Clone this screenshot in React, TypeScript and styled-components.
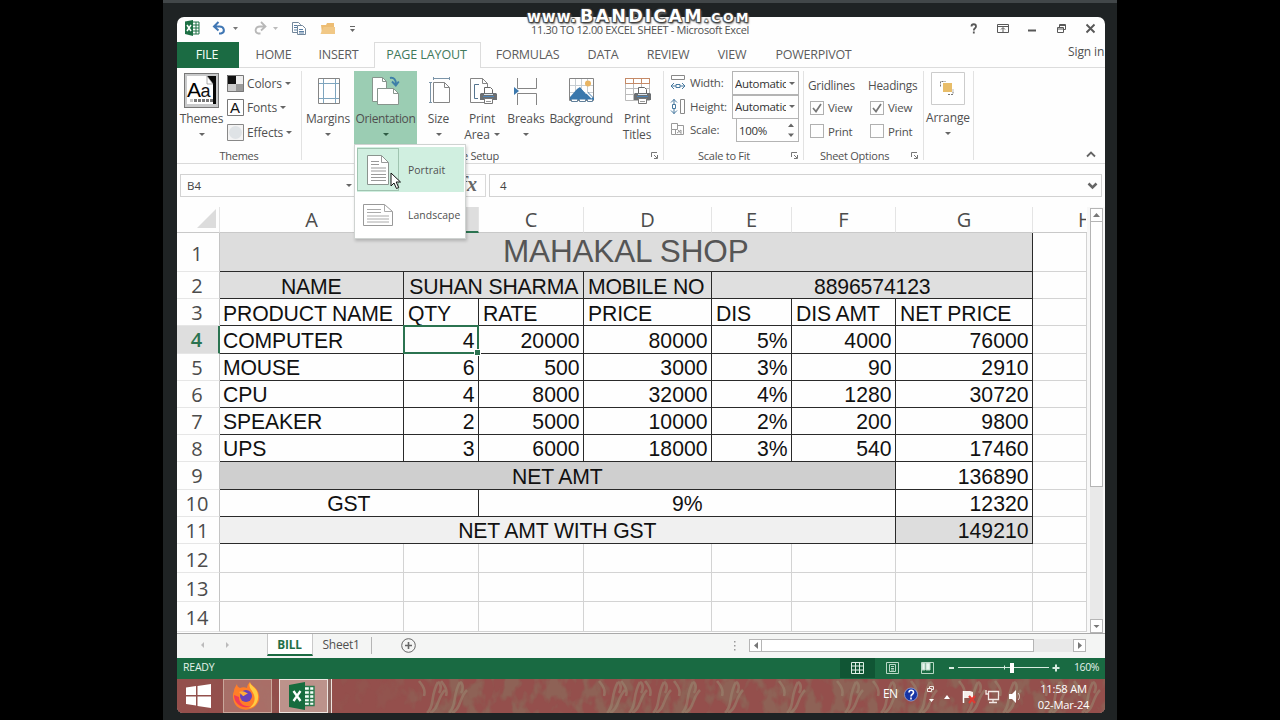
import React from "react";
import styled, { createGlobalStyle, css } from "styled-components";

const GREEN = "#1b6b43";
const UI = `"Open Sans", "Noto Sans", sans-serif`;

const Global = createGlobalStyle`
  * { box-sizing: border-box; }
  body { margin: 0; background: #000; font-family: ${UI}; color: #505050; overflow: hidden; }
  svg { display: block; flex: none; }
`;

const Stage = styled.div`
  position: relative;
  width: 1280px;
  height: 720px;
  padding-left: 163px;
  background: #000;
`;
const Bezel = styled.div`
  width: 954px;
  height: 720px;
  padding: 14px 12px 7px 14px;
  background: #1f2324;
  border-top: 3px solid #424749;
`;
const Screen = styled.div`
  display: flex;
  flex-direction: column;
  width: 928px;
  height: 696px;
  overflow: hidden;
  background: #fefefe;
  border-radius: 7px 7px 6px 6px;
`;
const Watermark = styled.div`
  position: absolute;
  left: 527px;
  top: 6px;
  display: flex;
  align-items: baseline;
  color: #fff;
  font-family: "DejaVu Sans", sans-serif;
  font-weight: bold;
  line-height: 20px;
  text-shadow: 0 0 2px #333, 1px 1px 1px #444, -1px 1px 1px #555, 1px 2px 2px #777, 0 -1px 1px #444;
`;
const Mark = styled.span<{ $size: number; $gap: number; $w: number }>`
  width: ${(p) => p.$w}px;
  font-size: ${(p) => p.$size}px;
  letter-spacing: ${(p) => p.$gap}px;
  white-space: nowrap;
`;

/* title bar */
const TitleBar = styled.div`
  display: flex;
  flex: none;
  height: 25px;
`;
const QuickAccess = styled.div`
  width: 240px;
`;
const Title = styled.div`
  flex: 1;
  padding: 5px 0 0 114px;
  font-size: 11px;
  line-height: 16px;
  letter-spacing: -0.33px;
  white-space: nowrap;
`;
const WindowButtons = styled.div`
  width: 145px;
`;

/* tabs */
const TabStrip = styled.div`
  display: flex;
  flex: none;
  height: 26px;
  box-shadow: inset 0 -1px #dcdcdc;
`;
const Tab = styled.div<{ $w: number; $kind?: "file" | "active"; $trail?: number }>`
  width: ${(p) => p.$w}px;
  padding-right: ${(p) => p.$trail ?? 0}px;
  text-align: center;
  font-size: 12.5px;
  line-height: 26px;
  letter-spacing: -0.25px;
  white-space: nowrap;
  color: #5c5c5c;
  ${(p) => p.$kind === "file" && css`background: ${GREEN}; color: #f2fff6; `}
  ${(p) => p.$kind === "active" && css`background: #fefefe; color: #41795a; border: 1px solid #dcdcdc; border-bottom: 0; line-height: 24px; letter-spacing: -0.1px;`}
`;
const SignIn = styled.div`
  margin-left: auto;
  width: 37px;
  font-size: 12px;
  line-height: 19px;
  letter-spacing: -0.1px;
  white-space: nowrap;
`;

/* ribbon */
const Ribbon = styled.div`
  display: flex;
  flex: none;
  height: 96px;
  padding-top: 3px;
  border-bottom: 1px solid #dadada;
`;
const Group = styled.div<{ $w: number }>`
  position: relative;
  display: flex;
  flex-direction: column;
  width: ${(p) => p.$w}px;
  height: 89px;
  border-right: 1px solid #e2e2e2;
`;
const GroupBody = styled.div`
  display: flex;
  flex: none;
  height: 76px;
`;
const GroupLabel = styled.div<{ $trail?: number }>`
  position: relative;
  flex: none;
  height: 17px;
  padding-right: ${(p) => p.$trail ?? 0}px;
  text-align: center;
  font-size: 11px;
  line-height: 18px;
  letter-spacing: -0.25px;
  white-space: nowrap;
`;
const Launcher = styled.svg`
  position: absolute;
  right: 4px;
  top: 4px;
`;
const BigButton = styled.div<{ $w: number; $open?: boolean }>`
  display: flex;
  flex-direction: column;
  align-items: center;
  width: ${(p) => p.$w}px;
  height: 73px;
  padding-top: 4px;
  font-size: 12px;
  line-height: 16px;
  letter-spacing: ${(p) => (p.$w > 60 ? -0.4 : -0.12)}px;
  white-space: nowrap;
  background: ${(p) => (p.$open ? "#9bcdb3" : "transparent")};
`;
const ButtonLabel = styled.span`
  margin-top: 4px;
`;
const ArrowRow = styled.span`
  display: flex;
  align-items: center;
  justify-content: center;
  gap: 4px;
  height: 15px;
`;
const SmallList = styled.div`
  display: flex;
  flex-direction: column;
`;
const SmallItem = styled.div`
  display: flex;
  align-items: center;
  gap: 3px;
  height: 24.5px;
  padding-left: 1px;
  font-size: 12px;
  letter-spacing: -0.15px;
`;
const ScaleList = styled.div`
  width: 68px;
  padding-left: 6px;
`;
const ScaleRow = styled.div`
  display: flex;
  align-items: center;
  gap: 4px;
  height: 23.5px;
  font-size: 11.5px;
  letter-spacing: -0.2px;
`;
const Combos = styled.div`
  display: flex;
  flex-direction: column;
  align-items: flex-end;
  width: 67px;
`;
const Combo = styled.div<{ $w: number }>`
  display: flex;
  align-items: center;
  justify-content: space-between;
  width: ${(p) => p.$w}px;
  height: 24px;
  padding: 0 3px 0 2px;
  border: 1px solid #b4b4b4;
  & + & { margin-top: -0.5px; }
  color: #333;
  font-size: 11.5px;
  letter-spacing: -0.3px;
`;
const Clip = styled.span`
  width: 51px;
  overflow: hidden;
  white-space: nowrap;
`;
const CheckColumn = styled.div<{ $w: number }>`
  width: ${(p) => p.$w}px;
  padding: 3px 0 0 4px;
  font-size: 11.8px;
  letter-spacing: -0.25px;
`;
const CheckTitle = styled.div`
  height: 22px;
  line-height: 22px;
`;
const CheckRow = styled.div`
  display: flex;
  align-items: center;
  gap: 4px;
  height: 23.5px;
  padding-left: 2px;
  font-size: 11.5px;
`;
const Box = styled.span`
  width: 14px;
  height: 14px;
  border: 1px solid #b0b0b0;
`;
const Collapse = styled.div`
  margin: 78px 8px 0 auto;
`;
const Menu = styled.div`
  position: absolute;
  z-index: 5;
  left: 52px;
  top: 73px;
  width: 112px;
  height: 95px;
  padding: 2px 1px 3px 2px;
  background: #fff;
  border: 1px solid #cfd3d1;
  box-shadow: 1px 2px 3px #0003;
`;
const MenuItem = styled.div<{ $on?: boolean }>`
  display: flex;
  align-items: center;
  gap: 9px;
  height: 45px;
  font-size: 10.4px;
  line-height: 40px;
  letter-spacing: 0.05px;
  background: ${(p) => (p.$on ? "#d0efe0" : "transparent")};
`;
const MenuIcon = styled.span<{ $on?: boolean }>`
  display: flex;
  align-items: center;
  justify-content: center;
  width: 42px;
  height: 43px;
  border: 1px solid ${(p) => (p.$on ? "#9fc4b0" : "transparent")};
`;
const Pointer = styled.svg`
  position: absolute;
  z-index: 6;
  left: 390px;
  top: 172px;
`;

/* formula bar */
const FormulaBar = styled.div`
  display: flex;
  flex: none;
  height: 43px;
  padding: 10px 3px 0 3px;
`;
const Field = styled.div<{ $w: number; $pad?: number }>`
  display: flex;
  align-items: center;
  justify-content: space-between;
  width: ${(p) => p.$w}px;
  height: 23px;
  padding: 0 3px 0 ${(p) => p.$pad ?? 6}px;
  border: 1px solid #d2d2d2;
  font-size: 11.5px;
  color: #444;
`;
const Fx = styled.div`
  width: 130px;
  height: 23px;
  margin-right: 3px;
  padding-right: 8px;
  border: 1px solid #d8d8d8;
  border-left: 0;
  text-align: right;
  font: italic bold 20px/18px "Liberation Serif", serif;
  color: #666;
`;

/* sheet */
const SheetArea = styled.div`
  display: flex;
  flex: none;
  height: 426px;
`;
const Grid = styled.div`
  display: grid;
  width: 910px;
  grid-template-columns: 43px 184px 75px 105px 128px 80px 104px 137px 54px;
  grid-template-rows: 26px 39px 27px 27px 28px 27px 27px 27px 27px 28px 27px 27px 29px 29px 30px;
`;
const Head = styled.div<{ $on?: boolean; $row?: boolean; $gr: number; $gc: number }>`
  display: flex;
  align-items: center;
  justify-content: center;
  grid-row: ${(p) => p.$gr};
  grid-column: ${(p) => p.$gc};
  overflow: hidden;
  font-size: 20px;
  color: #4c4c4c;
  border-right: 1px solid #e4e4e4;
  border-bottom: 1px solid #c9c9c9;
  ${(p) => p.$row && css`border-right-color: #c4c4c4; border-bottom-color: #e6e6e6; padding: ${p.$gr > 12 || p.$gr === 2 ? 3 : 1}px 2px 0 0; line-height: 24px; `}
  ${(p) => p.$on && css`background: #dedede; color: #2b7350;`}
  ${(p) => p.$on && p.$row && css`font-weight: 600; border-right: 2px solid #2b7350;`}
  ${(p) => p.$on && !p.$row && css`border-bottom: 2px solid #2b7350;`}
`;
const HeadH = styled(Head)`
  justify-content: flex-end;
  border-right: 0;
  padding-right: 1px;
`;
const HClip = styled.span`
  width: 8px;
  overflow: hidden;
`;
const Corner = styled.div`
  display: flex;
  justify-content: flex-end;
  align-items: flex-end;
  padding: 0 3px 3px 0;
  border-right: 1px solid #e4e4e4;
  border-bottom: 1px solid #c9c9c9;
`;
const Cell = styled.div<{ $r: number; $c: number; $span: number; $align: string; $fill: string; $line: string; $big: boolean }>`
  display: flex;
  align-items: center;
  justify-content: ${(p) => p.$align};
  grid-row: ${(p) => p.$r + 1};
  grid-column: ${(p) => p.$c + 1} / span ${(p) => p.$span};
  padding: ${(p) => (p.$big ? 0 : p.$r < 5 ? 2.6 : 1.6)}px 3.5px 0 ${(p) => (p.$c === 1 ? 3 : 4)}px;
  overflow: hidden;
  background: ${(p) => p.$fill};
  border-right: 1px solid ${(p) => p.$line};
  border-bottom: 1px solid ${(p) => p.$line};
  font-family: "Liberation Sans", Arial, sans-serif;
  font-size: ${(p) => (p.$big ? 31.5 : 21.2)}px;
  letter-spacing: ${(p) => (p.$align === "flex-end" ? 0 : -0.15)}px;
  line-height: 1;
  white-space: nowrap;
  color: ${(p) => (p.$big ? "#555" : "#111")};
`;
const Selection = styled.div`
  position: relative;
  z-index: 2;
  grid-row: 5;
  grid-column: 3;
  margin: -1px 0 0 -1px;
  border: 2px solid #2b7350;
  &::after {
    content: "";
    position: absolute;
    right: -3px;
    bottom: -3px;
    width: 5px;
    height: 5px;
    background: #2b7350;
    outline: 1px solid #fff;
  }
`;
const VScroll = styled.div`
  display: flex;
  flex-direction: column;
  width: 18px;
  padding: 1px 2px 0 3px;
  background: #f8f8f8;
`;
const ScrollButton = styled.div`
  display: flex;
  flex: none;
  align-items: center;
  justify-content: center;
  width: 13px;
  height: 14px;
  background: #fff;
  border: 1px solid #b5b5b5;
`;
const HButton = styled(ScrollButton)`
  height: 13px;
`;
const VThumb = styled.div`
  width: 13px;
  height: 266px;
  background: #fff;
  border: 1px solid #b5b5b5;
  border-top: 0;
`;
const VTrack = styled.div`
  width: 13px;
  height: 132px;
  background: #e9e9e9;
`;

/* sheet tabs */
const SheetTabs = styled.div`
  display: flex;
  flex: none;
  height: 25px;
  background: #f4f5f4;
  border-top: 1px solid #a9a9a9;
`;
const TabNav = styled.div`
  display: flex;
  gap: 20px;
  width: 90px;
  padding: 7px 0 0 23px;
`;
const SheetTab = styled.div<{ $w: number; $on?: boolean }>`
  width: ${(p) => p.$w}px;
  height: 22px;
  padding-right: 1px;
  text-align: center;
  font-size: 12px;
  line-height: 22px;
  letter-spacing: -0.25px;
  ${(p) => p.$on && css`background: #fff; color: #1f6f47; font-weight: 700; border: 1px solid #c9c9c9; border-width: 0 1px 2px; border-bottom-color: ${GREEN}; font-size: 11.8px; line-height: 21px; letter-spacing: -0.15px;`}
`;
const TabDivider = styled.div`
  width: 1px;
  height: 17px;
  margin: 3px 29px 0 1px;
  background: #b5b5b5;
`;
const PlusIcon = styled.svg`
  margin-top: 4px;
`;
const HScroll = styled.div`
  display: flex;
  width: 337px;
  height: 13px;
  margin: 5px 19px 0 auto;
  background: #e9e9e9;
`;
const HThumb = styled.div`
  width: 272px;
  margin-right: auto;
  background: #fff;
  border: 1px solid #b5b5b5;
  border-left: 0;
`;
const Dots = styled.div`
  margin: 6px 0 0 317px;
`;

/* status bar */
const StatusBar = styled.div`
  display: flex;
  flex: none;
  height: 21px;
  padding-left: 6px;
  color: #e4f2ea;
  background: #196a42;
  font-size: 10.5px;
  line-height: 19px;
  letter-spacing: -0.2px;
`;
const Ready = styled.span`
  flex: 1;
`;
const ViewButton = styled.div<{ $on?: boolean }>`
  display: flex;
  align-items: center;
  justify-content: center;
  width: 35px;
  height: 20px;
  background: ${(p) => (p.$on ? "#105534" : "transparent")};
`;
const ZoomSlider = styled.svg`
  margin-left: 4px;
`;
const ZoomText = styled.span`
  margin-left: 12px;
  width: 31px;
  letter-spacing: -0.4px;
`;

/* taskbar */
const Taskbar = styled.div`
  position: relative;
  display: flex;
  flex: none;
  height: 34px;
  background: #93504d;
  color: #fff;
`;
const Wallpaper = styled.svg`
  position: absolute;
  inset: 0;
`;
const Start = styled.div`
  z-index: 1;
  width: 46px;
  padding: 5px 0 0 9px;
`;
const TaskButton = styled.div<{ $on?: boolean }>`
  z-index: 1;
  display: flex;
  align-items: center;
  justify-content: center;
  width: 49px;
  height: 34px;
  margin-right: 7px;
  padding-right: 3px;
  background: ${(p) => (p.$on ? "#d0b4abaa" : "#c99d9066")};
  border: 1px solid ${(p) => (p.$on ? "#eee5e0" : "#c9a79b")};
  ${(p) => p.$on && css`box-shadow: 3px 0 0 #8b6660, 4px 0 0 #eee5e0;`}
`;
const Tray = styled.div`
  z-index: 1;
  display: flex;
  margin-left: auto;
`;
const Lang = styled.span`
  width: 20px;
  font-size: 12px;
  line-height: 30px;
  letter-spacing: -0.7px;
`;
const Clock = styled.div`
  width: 80px;
  padding: 2px 3px 0 0;
  text-align: center;
  font-size: 11.2px;
  line-height: 16px;
  letter-spacing: -0.25px;
`;

const ThemesSvg = styled.svg`
  margin-top: -2px;
  margin-bottom: -1px;
`;
const ArrangeSvg = styled.svg`
  margin-top: -3px;
  margin-bottom: 1px;
`;

const Down = ({ color = "#666", w = 6 }: { color?: string; w?: number }) => (
  <svg width={w} height="3" viewBox="0 0 6 3"><path d="M0 0h6L3 3z" fill={color} /></svg>
);

const QuickIcons = () => (
  <svg width="240" height="25" fill="none">
    <path d="M8 4.500l8-1.500v16l-8-2z" fill="#1d7044" />
    <path d="M16 5h6v12h-6M16 8h6M16 11h6M16 14h6M19 5v12" fill="none" stroke="#1d7044" />
    <path d="M10 8l4 6M14 8l-4 6" stroke="#fff" strokeWidth="1.500" />
    <path d="M37.500 9.500h5c5 0 6 6 1.500 7h-2M41.500 5L37 9.500l4.500 4" stroke="#4077b4" strokeWidth="2" />
    <path d="M56 10h5l-2.500 3z" fill="#777" />
    <path d="M88 9.500h-5c-5 0-6 6-1.500 7h2M84 5l4.500 4.500-4.500 4" stroke="#b8b8b8" strokeWidth="1.800" />
    <path d="M96 10h5l-2.500 3z" fill="#bbb" />
    <path d="M115.500 5.500h6l2 2v8h-8z" fill="#fff" stroke="#72879b" />
    <path d="M120.500 8.500h5l3 3v6h-8z" fill="#fff" stroke="#72879b" />
    <path d="M117 8.500h3M117 10.500h3M117 13h3M122 12.500h4M122 14.500h5M122 16h5" stroke="#5a7ea3" />
    <path d="M144 8h5l1-2h7v4h-9l-3 7z" fill="#edbd73" />
    <path d="M143.500 17l3-7h11.500v7z" fill="#f1c886" />
    <path d="M173 9.500h5" stroke="#666" /><path d="M173 12h5l-2.500 3z" fill="#666" />
  </svg>
);

const WindowIcons = () => (
  <svg width="145" height="25" fill="none" stroke="#585858">
    <path d="M11.500 9.500c0-3 4.500-3 4.500 0 0 2-2.200 1.500-2.200 4M13.800 14.500v2" strokeWidth="1.800" />
    <path d="M37.500 7.500h11v8h-11zM37.500 9.500h11M43 15v-4M41 12.500l2-2 2 2" />
    <path d="M68 13.500h8" strokeWidth="2" />
    <path d="M97.500 10.500h6v5h-6zM97.500 12h6M99.500 10V7.500h6v5h-2M99.500 8.500h6" />
    <path d="M126.500 7.500l8 8M134.500 7.500l-8 8" strokeWidth="1.900" />
  </svg>
);

const ThemesIcon = () => (
  <ThemesSvg width="35" height="35">
    <rect x=".5" y=".5" width="34" height="34" fill="#c9cacb" stroke="#777" />
    <rect x="3" y="3" width="26" height="28" fill="#fff" />
    <path d="M23 3h9v28h-3V11z" fill="#080808" /><path d="M23 3v8h6z" fill="#fff" stroke="#777" strokeWidth=".6" />
    <text x="3" y="23.500" fontFamily="Liberation Sans" fontSize="21" fill="#000">A</text>
    <text x="16.500" y="23.500" fontFamily="Liberation Sans" fontSize="18" fill="#111">a</text>
    <g fill="#777"><path d="M6 26h3v3H6z" opacity=".4" /><path d="M10 26h3v3h-3zM14 26h3v3h-3zM18 26h3v3h-3zM22 26h3v3h-3zM26 26h3v3h-3z" /></g>
  </ThemesSvg>
);

const page = "#858585";
const Printer = ({ x, y }: { x: number; y: number }) => (
  <g transform={`translate(${x} ${y})`}>
    <path d="M4.500 7V.5h6l2 2V7" fill="#fff" stroke="#666" />
    <path d="M1 6h15l1 1v6H0V7z" fill="#6b6f72" /><path d="M4 7.500h9" stroke="#dce6ee" /><path d="M3 9.500h11" stroke="#4c84b8" />
    <path d="M4.500 11.500h8v5h-8z" fill="#fff" stroke="#777" /><path d="M6 14.500h5" stroke="#999" />
  </g>
);
const icons: Record<string, React.ReactNode> = {
  margins: <><path d="M6.500 3.500h21v25h-21z" fill="#fff" stroke={page} /><path d="M11.500 4v24M23.500 4v24M7 8.500h20M7 23.500h20" stroke="#7ea5be" /></>,
  orientation: <><path d="M2.500 2.500h10l4 4v20h-14z" fill="#fff" stroke="#87958d" /><path d="M12.500 2.500v4h4" fill="none" stroke="#87958d" /><path d="M7.500 13.500h16l5 5v11h-21z" fill="#fff" stroke="#87958d" /><path d="M23.500 13.500v5h5" fill="none" stroke="#87958d" /><path d="M20 3c4-1 6 2 6 6M22 6.500l3.800 4 3-4" fill="none" stroke="#3e7fa8" strokeWidth="1.900" /></>,
  size: <><path d="M10.500 7.500h11l5 5v15h-16zM21.500 7.500v5h5" fill="#fff" stroke={page} /><path d="M10 3.500h17M10.500 2v3M26.500 2v3M7.500 8v19M6 7.500h3M6 27.500h3" fill="none" stroke="#7b94a8" /></>,
  area: <><path d="M4.500 3.500h12l5 5v19h-17zM16.500 3.500v5h5" fill="#fff" stroke={page} /><path d="M13 9.500H8.500v14H12" fill="none" stroke="#54748f" /><Printer x={14} y={12} /></>,
  breaks: <><path d="M7.500 3v10.500h19V3M7.500 30V18.500h19V30" fill="none" stroke={page} /><path d="M4 12l5 4-5 4z" fill="#3c78ad" /></>,
  background: <><path d="M4.500 3.500h24v22h-24z" fill="#fff" stroke={page} /><path d="M10.500 4v21M16.500 4v21M22.500 4v21M5 10.500h23M5 17.500h23" stroke="#c6cdd2" /><circle cx="23" cy="8.500" r="3" fill="#e9b564" /><path d="M5 22l7-8 3-2 6 7 2-2 6 6v2H5z" fill="#3a78ad" /><path d="M17 13l10 10" stroke="#fff" strokeWidth="1.500" /><path d="M6.500 24.500v2h6v-2M14.500 24.500v2h6v-2M22.500 24.500v2h5v-2" fill="#fff" stroke="#61809b" /></>,
  titles: <><path d="M4.500 3.500h24v22h-24z" fill="#fff" stroke="#bbb" /><path d="M12.500 4v21M20.500 4v21M5 13.500h23M5 19.500h23" stroke="#bbb" /><path d="M4 3.500h25M4 8.500h25M4.500 3v5M12.500 3v5M20.500 3v5M28.500 3v5" stroke="#c58a67" /><Printer x={13} y={12} /></>,
};
const Icon = ({ name }: { name: string }) => <svg width="32" height="32" fill="none">{icons[name]}</svg>;

const LauncherIcon = () => (
  <Launcher width="9" height="9" fill="none" stroke="#777"><path d="M1.500 6V1.500H7M4 4l3 3M7.500 4v3.500H4" /></Launcher>
);

const Check = ({ on, children }: { on?: boolean; children: React.ReactNode }) => (
  <CheckRow>
    <Box>{on && <svg width="12" height="12"><path d="M2 6l3 3.500L10 2" fill="none" stroke="#777" strokeWidth="1.700" /></svg>}</Box>
    {children}
  </CheckRow>
);

const PageIcon = ({ wide }: { wide?: boolean }) => wide ? (
  <svg width="30" height="22" fill="none" stroke="#999"><path d="M.5.500h21l8 7v14H.5z" fill="#fff" /><path d="M21.500.500v7h8M4 5.500h14M4 8.500h14M4 12h22M4 15h22M4 18h22" stroke="#aaa" /></svg>
) : (
  <svg width="23" height="30" fill="none" stroke="#8a948e"><path d="M.5.500h14l7 7v22H.5z" fill="#fff" /><path d="M14.500.500v7h7M4 6.500h8M4 9.500h8M4 13h15M4 16h15M4 19.500h15M4 22.500h15M4 25.500h15" stroke="#999" /></svg>
);

type C = [number, number, string, number?, ("s" | "c" | "e")?, string?, boolean?];
const LIGHT = "#fefefe";
const products: string[][] = [
  ["COMPUTER", "4", "20000", "80000", "5%", "4000", "76000"],
  ["MOUSE", "6", "500", "3000", "3%", "90", "2910"],
  ["CPU", "4", "8000", "32000", "4%", "1280", "30720"],
  ["SPEAKER", "2", "5000", "10000", "2%", "200", "9800"],
  ["UPS", "3", "6000", "18000", "3%", "540", "17460"],
];
const cells: C[] = [
  [1, 1, "MAHAKAL SHOP", 7, "c", "#dddddd", true],
  [2, 1, "NAME", 1, "c", "#dfdfdf"],
  [2, 2, "SUHAN SHARMA", 2, "c", "#dfdfdf"],
  [2, 4, "MOBILE NO", 1, "s", "#dfdfdf"],
  [2, 5, "8896574123", 3, "c", "#dfdfdf"],
  ...["PRODUCT NAME", "QTY", "RATE", "PRICE", "DIS", "DIS AMT", "NET PRICE"].map((t, i): C => [3, i + 1, t, 1, "s"]),
  ...products.flatMap((row, r) => row.map((t, i): C => [r + 4, i + 1, t, 1, i ? "e" : "s"])),
  [9, 1, "NET AMT", 6, "c", "#cfcfcf"],
  [9, 7, "136890", 1, "e"],
  [10, 1, "GST", 2, "c"],
  [10, 3, "9%", 4, "c"],
  [10, 7, "12320", 1, "e"],
  [11, 1, "NET AMT WITH GST", 6, "c", "#f0f0f0"],
  [11, 7, "149210", 1, "e", "#dddddd"],
];
const blanks: [number, number][] = [
  ...Array.from({ length: 11 }, (_, i): [number, number] => [i + 1, 8]),
  ...[12, 13, 14].flatMap((r) => [1, 2, 3, 4, 5, 6, 7, 8].map((c): [number, number] => [r, c])),
];
const justify = { s: "flex-start", c: "center", e: "flex-end" };

/* arched fronds of the desktop wallpaper that show through the taskbar */
const fronds = [250, 272, 430, 452, 476, 505, 548, 610, 668, 704, 742, 790, 826, 872, 905];

export default function App() {
  return (
    <Stage>
      <Global />
      <Bezel>
        <Screen>
          <TitleBar>
            <QuickAccess><QuickIcons /></QuickAccess>
            <Title>11.30 TO 12.00 EXCEL SHEET - Microsoft Excel</Title>
            <WindowButtons><WindowIcons /></WindowButtons>
          </TitleBar>
          <TabStrip>
            <Tab $w={62} $kind="file" $trail={2}>FILE</Tab>
            <Tab $w={69}>HOME</Tab>
            <Tab $w={66} $trail={5}>INSERT</Tab>
            <Tab $w={107} $kind="active" $trail={2}>PAGE LAYOUT</Tab>
            <Tab $w={93}>FORMULAS</Tab>
            <Tab $w={58}>DATA</Tab>
            <Tab $w={72}>REVIEW</Tab>
            <Tab $w={56}>VIEW</Tab>
            <Tab $w={107}>POWERPIVOT</Tab>
            <SignIn>Sign in</SignIn>
          </TabStrip>
          <Ribbon>
            <Group $w={125}>
              <GroupBody>
                <BigButton $w={49}><ThemesIcon /><ButtonLabel>Themes</ButtonLabel><ArrowRow><Down /></ArrowRow></BigButton>
                <SmallList>
                  <SmallItem><svg width="17" height="17"><path d="M0 0h9v9H0z" fill="#111" /><path d="M9 0h8v9H9z" fill="#eee" /><path d="M0 9h9v8H0z" fill="#ccc" /><path d="M9 9h8v8H9z" fill="#999" /><path d="M.5.500h16v16H.5z" fill="none" stroke="#777" /></svg>Colors <Down /></SmallItem>
                  <SmallItem><svg width="17" height="17"><path d="M.5.500h16v16H.5z" fill="#fff" stroke="#777" /><text x="3" y="14" fontSize="15" fontFamily="Liberation Sans" fill="#111">A</text></svg>Fonts <Down /></SmallItem>
                  <SmallItem><svg width="17" height="17"><path d="M.5.500h16v16H.5z" fill="#f4f4f4" stroke="#888" /><circle cx="8.500" cy="8.500" r="6.500" fill="#dfe3e6" /></svg>Effects <Down /></SmallItem>
                </SmallList>
              </GroupBody>
              <GroupLabel>Themes</GroupLabel>
            </Group>
            <Group $w={362}>
              <GroupBody>
                <BigButton $w={52}><Icon name="margins" /><ButtonLabel>Margins</ButtonLabel><ArrowRow><Down /></ArrowRow></BigButton>
                <BigButton $w={63} $open><Icon name="orientation" /><ButtonLabel>Orientation</ButtonLabel><ArrowRow><Down color="#2e5c44" /></ArrowRow></BigButton>
                <BigButton $w={43}><Icon name="size" /><ButtonLabel>Size</ButtonLabel><ArrowRow><Down /></ArrowRow></BigButton>
                <BigButton $w={44}><Icon name="area" /><ButtonLabel>Print</ButtonLabel><ArrowRow>Area <Down /></ArrowRow></BigButton>
                <BigButton $w={44}><Icon name="breaks" /><ButtonLabel>Breaks</ButtonLabel><ArrowRow><Down /></ArrowRow></BigButton>
                <BigButton $w={66}><Icon name="background" /><ButtonLabel>Background</ButtonLabel></BigButton>
                <BigButton $w={46}><Icon name="titles" /><ButtonLabel>Print</ButtonLabel><ArrowRow>Titles</ArrowRow></BigButton>
              </GroupBody>
              <GroupLabel $trail={22}>Page Setup<LauncherIcon /></GroupLabel>
              <Menu>
                <MenuItem $on><MenuIcon $on><PageIcon /></MenuIcon>Portrait</MenuItem>
                <MenuItem><MenuIcon><PageIcon wide /></MenuIcon>Landscape</MenuItem>
              </Menu>
            </Group>
            <Group $w={140}>
              <GroupBody>
                <ScaleList>
                  <ScaleRow><svg width="16" height="15" fill="none"><path d="M1.500.500h13v4h-13z" stroke="#888" /><path d="M1 11h14M4 8l-3 3 3 3M12 8l3 3-3 3" stroke="#47799f" /><path d="M6 9.500h4v3H6z" fill="#fff" stroke="#47799f" /></svg>Width:</ScaleRow>
                  <ScaleRow><svg width="16" height="15" fill="none"><path d="M10.500.500h4v14h-4z" stroke="#888" /><path d="M4 0v15M1 3.500l3-3 3 3M1 11.500l3 3 3-3" stroke="#47799f" /><path d="M2.500 5.500h3v4h-3z" fill="#fff" stroke="#47799f" /></svg>Height:</ScaleRow>
                  <ScaleRow><svg width="16" height="15" fill="none" stroke="#999"><path d="M1.500 1.500h6v6h-6zM7.500 3.500h6v9h-8v-5M1.500 7.500v5h4M7 11l4-3M8 8l3 3.500V8" /></svg>Scale:</ScaleRow>
                </ScaleList>
                <Combos>
                  <Combo $w={67}><Clip>Automatic</Clip><Down /></Combo>
                  <Combo $w={67}><Clip>Automatic</Clip><Down /></Combo>
                  <Combo $w={63}>100%<svg width="9" height="16"><path d="M2 5h6L5 1.500zM2 11.500h6L5 15z" fill="#666" /></svg></Combo>
                </Combos>
              </GroupBody>
              <GroupLabel $trail={19}>Scale to Fit<LauncherIcon /></GroupLabel>
            </Group>
            <Group $w={120}>
              <GroupBody>
                <CheckColumn $w={60}><CheckTitle>Gridlines</CheckTitle><Check on>View</Check><Check>Print</Check></CheckColumn>
                <CheckColumn $w={59}><CheckTitle>Headings</CheckTitle><Check on>View</Check><Check>Print</Check></CheckColumn>
              </GroupBody>
              <GroupLabel $trail={18}>Sheet Options<LauncherIcon /></GroupLabel>
            </Group>
            <Group $w={50}>
              <BigButton $w={48}>
                <ArrangeSvg width="34" height="33"><path d="M.5.500h33v32H.5z" fill="#fff" stroke="#ccc" /><path d="M9.500 14.500v-5h5M17 22.500h5v-5" fill="none" stroke="#777" strokeDasharray="2 1" /><path d="M12 11h9v9h-9z" fill="#e8bd69" /></ArrangeSvg>
                <ButtonLabel>Arrange</ButtonLabel><ArrowRow><Down /></ArrowRow>
              </BigButton>
            </Group>
            <Collapse><svg width="12" height="10"><path d="M2 7.500l4-4 4 4" fill="none" stroke="#666" strokeWidth="1.800" /></svg></Collapse>
          </Ribbon>
          <FormulaBar>
            <Field $w={176}>B4<Down /></Field>
            <Fx>fx</Fx>
            <Field $w={613} $pad={10}>4<svg width="11" height="8"><path d="M1.500 1.500l4 4 4-4" fill="none" stroke="#666" strokeWidth="2.500" /></svg></Field>
          </FormulaBar>
          <SheetArea>
            <Grid>
              <Corner><svg width="19" height="20"><path d="M19 0v19H0z" fill="#dcdcdc" /></svg></Corner>
              {["A", "B", "C", "D", "E", "F", "G"].map((c, i) => <Head key={c} $gr={1} $gc={i + 2} $on={c === "B"}>{c}</Head>)}
              <HeadH $gr={1} $gc={9}><HClip>H</HClip></HeadH>
              {Array.from({ length: 14 }, (_, i) => <Head key={i} $row $gr={i + 2} $gc={1} $on={i === 3}>{i + 1}</Head>)}
              {cells.map(([r, c, t, span = 1, a = "s", fill = LIGHT, big = false]) => (
                <Cell key={`${r}-${c}`} $r={r} $c={c} $span={span} $align={justify[a]} $fill={fill} $line="#2a2a2a" $big={big}>{t}</Cell>
              ))}
              {blanks.map(([r, c]) => <Cell key={`${r}-${c}`} $r={r} $c={c} $span={1} $align="center" $fill={LIGHT} $line="#d3d3d3" $big={false} />)}
              <Selection />
            </Grid>
            <VScroll>
              <ScrollButton><svg width="7" height="4"><path d="M0 4h7L3.500 0z" fill="#777" /></svg></ScrollButton>
              <VThumb />
              <VTrack />
              <ScrollButton><Down color="#777" w={7} /></ScrollButton>
            </VScroll>
          </SheetArea>
          <SheetTabs>
            <TabNav>
              <svg width="5" height="8"><path d="M4 1v6L1 4z" fill="#bbb" /></svg>
              <svg width="5" height="8"><path d="M1 1v6l3-3z" fill="#bbb" /></svg>
            </TabNav>
            <SheetTab $w={46} $on>BILL</SheetTab>
            <SheetTab $w={57}>Sheet1</SheetTab>
            <TabDivider />
            <PlusIcon width="15" height="15" fill="none" stroke="#666"><circle cx="7.500" cy="7.500" r="6.800" /><path d="M4 7.500h7M7.500 4v7" strokeWidth="1.600" /></PlusIcon>
            <Dots><svg width="3" height="12" fill="#999"><path d="M1 1h1.500v1.500H1zM1 5h1.500v1.500H1zM1 9h1.500v1.500H1z" /></svg></Dots>
            <HScroll>
              <HButton><svg width="4" height="7"><path d="M4 0v7L0 3.500z" fill="#777" /></svg></HButton>
              <HThumb />
              <HButton><svg width="4" height="7"><path d="M0 0v7l4-3.500z" fill="#777" /></svg></HButton>
            </HScroll>
          </SheetTabs>
          <StatusBar>
            <Ready>READY</Ready>
            <ViewButton $on><svg width="13" height="12" fill="none" stroke="#dff0e6"><path d="M.5.500h12v11H.5zM4.500 1v10M8.500 1v10M1 4h11M1 8h11" /></svg></ViewButton>
            <ViewButton><svg width="13" height="12" fill="none" stroke="#b9d8c6"><path d="M.5.500h12v11H.5zM3.500 2.500h6v7h-6zM5 4.500h3M5 6.500h3M5 8h3" /></svg></ViewButton>
            <ViewButton><svg width="13" height="12" fill="none" stroke="#b9d8c6"><path d="M.5.500h12v11H.5z" /><path d="M1 1h3v7H1zM5 1h4v7H5z" fill="#e8f5ee" /></svg></ViewButton>
            <ZoomSlider width="113" height="20" stroke="#d8ebe0"><path d="M0 10h5M103.500 10h7M107 6.500v7" strokeWidth="2" /><path d="M9 9.500h91M55.500 7.500v4" strokeWidth="1" /><path d="M61 5h4v10h-4z" fill="#fff" stroke="none" /></ZoomSlider>
            <ZoomText>160%</ZoomText>
          </StatusBar>
          <Taskbar>
            <Wallpaper width="928" height="34" fill="none">
              <defs>
                <filter id="foliage" x="0" y="0" width="100%" height="100%" colorInterpolationFilters="sRGB">
                  <feTurbulence type="fractalNoise" baseFrequency=".07 .045" numOctaves="3" seed="14" />
                  <feColorMatrix values="0 0 0 0 .54  0 0 0 0 .43  0 0 0 0 .36  5 0 0 0 -2.200" />
                </filter>
                <linearGradient id="fade">
                  <stop offset="0" stopColor="#222" /><stop offset=".23" stopColor="#444" /><stop offset=".28" stopColor="#fff" /><stop offset="1" stopColor="#fff" />
                </linearGradient>
                <mask id="spread"><rect width="928" height="34" fill="url(#fade)" /></mask>
              </defs>
              <rect width="928" height="34" fill="#944f4c" />
              <g mask="url(#spread)"><rect width="928" height="34" filter="url(#foliage)" opacity=".65" /></g>
              {fronds.map((x) => (
                <path key={x} transform={`translate(${x} 0)`} d="M0 34C8 27 3 17 11 3M3 34c9-4 7-15 15-23M11 3c4 2 3 8 1 11M-8 2c3 4 7 8 5 15" stroke="#9a8670" strokeWidth="2.600" strokeOpacity=".6" />
              ))}
            </Wallpaper>
            <Start><svg width="25" height="24" fill="#fff"><path d="M0 3.500l10-1.500v9H0zM11.500 2L25 0v11H11.500zM0 12.500h10v9L0 20zM11.500 12.500H25V24l-13.500-2z" /></svg></Start>
            <TaskButton>
              <svg width="30" height="30" viewBox="0 0 30 30">
                <path d="M3 10c0-3 2-5 3-7 0 2 1 3 3 4 2-1 5-1 7 0 0-3 2-5 3-6 1 4 5 4 7 8 3 5 3 10 0 14-5 8-18 7-22 0-2-4-3-9-1-13z" fill="#ff7e28" />
                <path d="M19 1c0 4 7 5 8 13 1 7-3 12-9 13 6-4 7-10 4-15-1-3-5-5-3-11z" fill="#ffcc42" />
                <path d="M3 14c0 9 9 15 17 11-8 1-12-3-12-9z" fill="#f23b55" />
                <circle cx="15" cy="15" r="6" fill="#6842b8" /><path d="M8 11c4-2 7 0 9 2-3 0-3 2-5 2z" fill="#ffae38" />
              </svg>
            </TaskButton>
            <TaskButton $on>
              <svg width="26" height="28" fill="none"><path d="M15 4.500h10v19H15M15 8.500h10M15 12.500h10M15 16.500h10M15 20h10M20.500 5v18" fill="#f4fff8" stroke="#2a7a4d" strokeWidth="1.400" /><path d="M0 3l16-3v28L0 25z" fill="#176c3e" /><path d="M4.500 9l7 10M11.500 9l-7 10" stroke="#fff" strokeWidth="2.300" /></svg>
            </TaskButton>
            <Tray>
              <Lang>EN</Lang>
              <svg width="122" height="34" fill="none">
                <circle cx="8" cy="15.500" r="6.500" fill="#1735a5" stroke="#9db4ea" strokeWidth=".7" />
                <path d="M6 13.500c0-3 4.500-3 4.500 0 0 2-2.500 1.500-2.500 4M8 18.500v2" stroke="#fff" strokeWidth="1.600" />
                <path d="M24.500 9.500h4v3h-4zM26.500 9V7.500h4v3H29" stroke="#f2e9e5" /><path d="M26 20h5l-2.500 3z" fill="#fff" />
                <path d="M41 20h6l-3-4z" fill="#fff" />
                <path d="M60.500 12v12" stroke="#fff" strokeWidth="1.500" /><path d="M61 12h6l3 1v6h-9z" fill="#f4eeea" /><path d="M66 17l6 7M72 17l-6 7" stroke="#e03a32" strokeWidth="2.200" />
                <path d="M85.500 12.500h10v8h-10zM90 20v3M86 23.500h8M83 11v4h3" stroke="#f2e9e5" strokeWidth="1.300" />
                <path d="M106 15h3l4-4v13l-4-4h-3z" fill="#fff" /><path d="M115 14c2 2 2 5 0 7" stroke="#e9dcd6" />
              </svg>
              <Clock><div>11:58 AM</div><div>02-Mar-24</div></Clock>
            </Tray>
          </Taskbar>
        </Screen>
      </Bezel>
      <Pointer width="12" height="18"><path d="M1 1v13l3-3 2.500 5.500 2.200-1L6.200 10H10.500z" fill="#fff" stroke="#111" /></Pointer>
      <Watermark>
        <Mark $size={15} $gap={1} $w={53}>www.</Mark>
        <Mark $size={17.5} $gap={2.2} $w={124}>BANDICAM</Mark>
        <Mark $size={12.5} $gap={2.5} $w={50}>.COM</Mark>
      </Watermark>
    </Stage>
  );
}
